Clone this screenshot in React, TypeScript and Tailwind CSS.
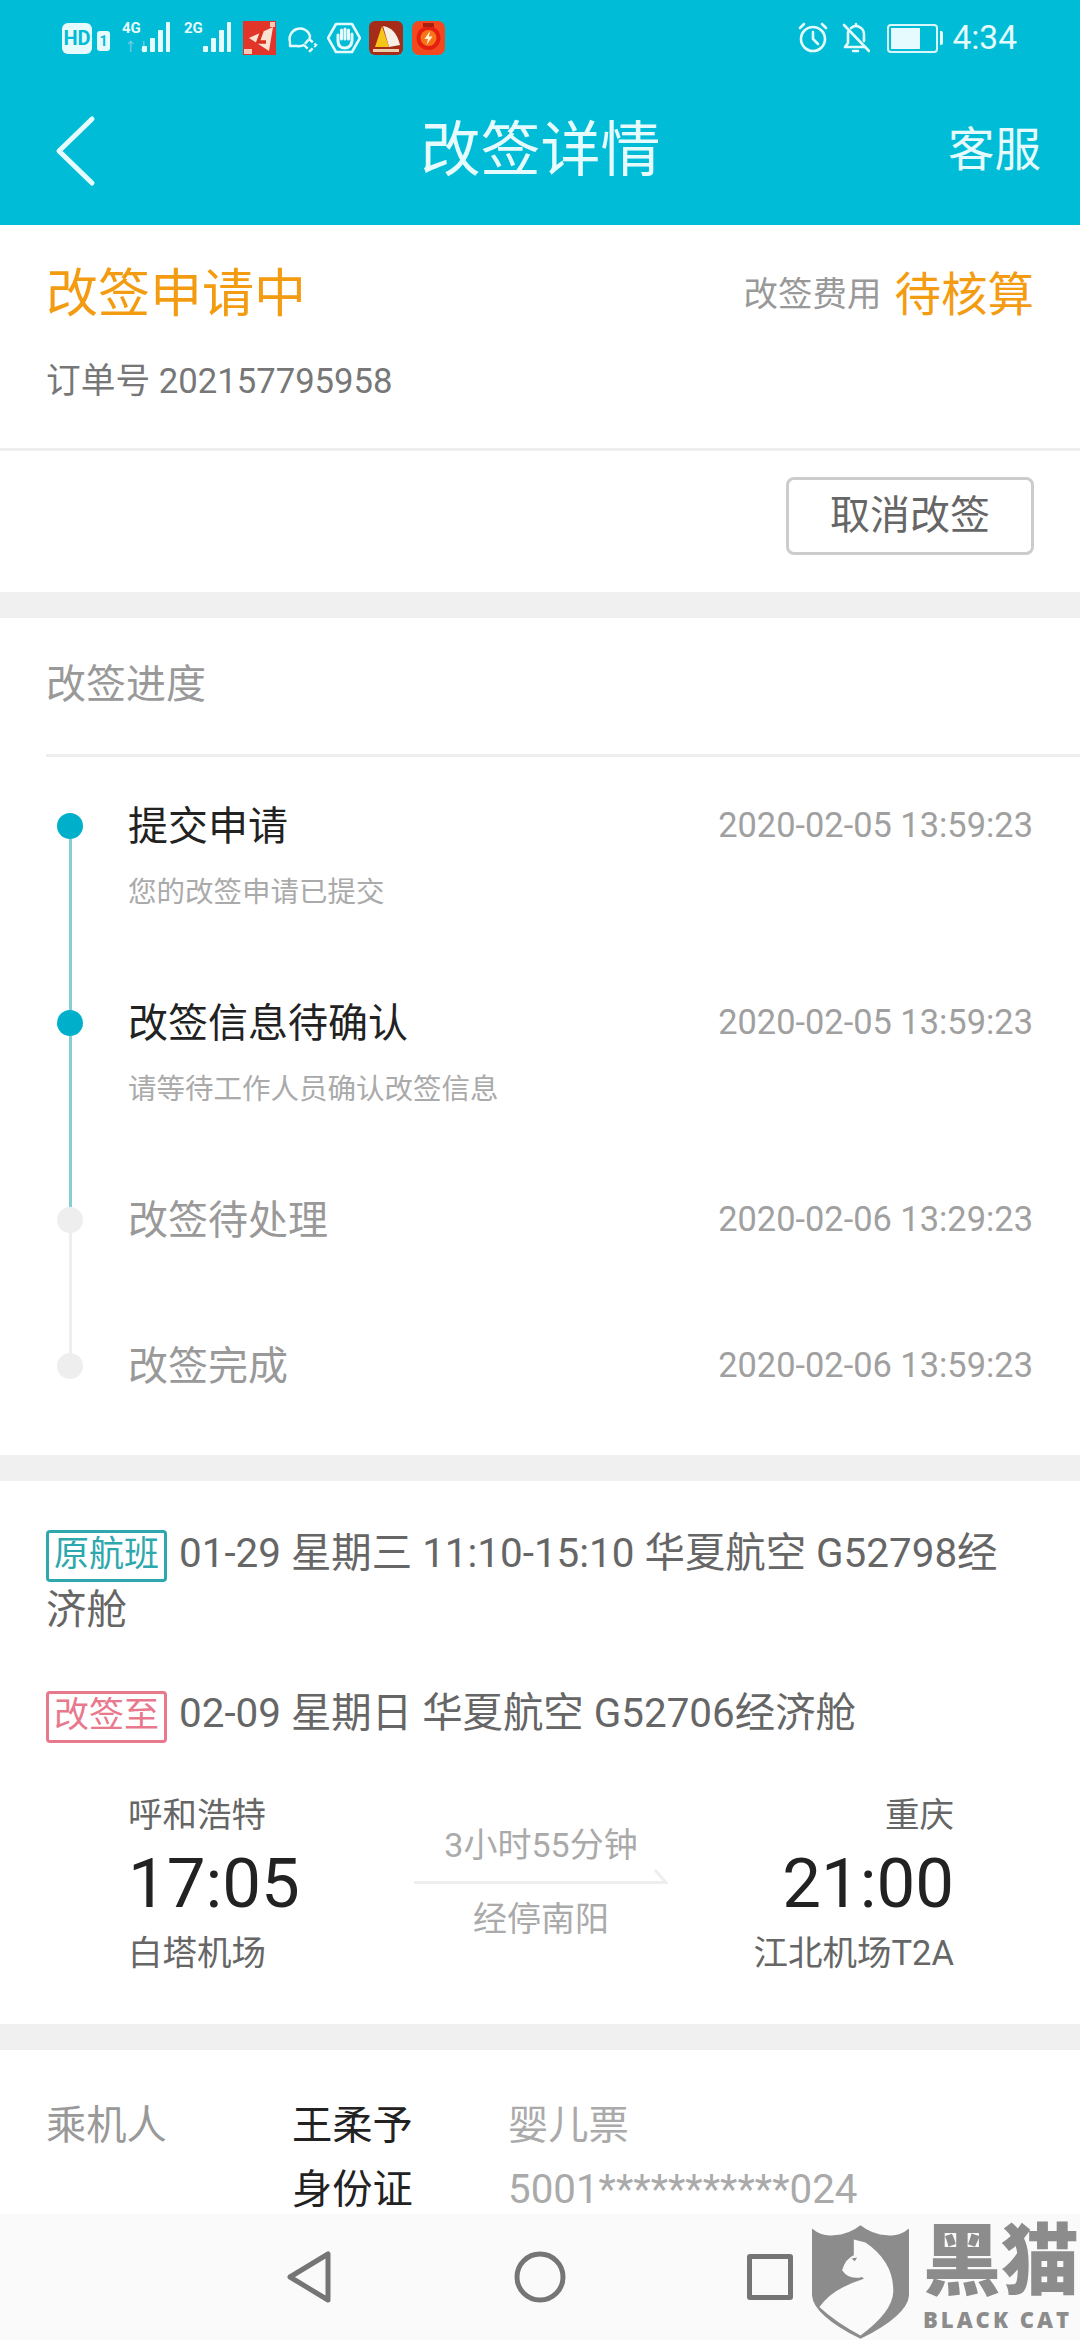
import React from "react";

const steps = [
  { title: "提交申请", sub: "您的改签申请已提交", time: "2020-02-05 13:59:23", done: true, lineDone: true, rowH: "h-[197px]" },
  { title: "改签信息待确认", sub: "请等待工作人员确认改签信息", time: "2020-02-05 13:59:23", done: true, lineDone: true, rowH: "h-[197px]" },
  { title: "改签待处理", sub: "", time: "2020-02-06 13:29:23", done: false, lineDone: false, rowH: "h-[146px]" },
  { title: "改签完成", sub: "", time: "2020-02-06 13:59:23", done: false, lineDone: false, rowH: "h-[26px]" },
];

const Bars = ({ className }: { className?: string }) => (
  <svg width="30" height="32" viewBox="0 0 30 32" className={className} fill="#e6fbfd">
    <rect x="0" y="25" width="5" height="6" rx="1" />
    <rect x="8" y="17" width="5" height="14" rx="1" />
    <rect x="16" y="9" width="5" height="22" rx="1" />
    <rect x="24" y="1" width="4" height="30" rx="1" />
  </svg>
);

const StatusBar = () => (
  <div className="h-[76px] flex items-center pl-[62px] pr-[63px] justify-between">
    <div className="flex items-center">
      <div className="w-[30px] h-[31px] rounded-[6px] bg-[#e6fbfd] text-[#00bcd6] text-[20px] leading-[31px] font-bold text-center">HD</div>
      <div className="ml-[5px] mt-[5px] w-[13px] h-[20px] rounded-[3px] bg-[#e6fbfd] text-[#00bcd6] text-[14px] leading-[20px] font-bold text-center">1</div>
      <div className="ml-[12px] relative w-[50px] h-[34px]">
        <span className="absolute left-0 -top-[2px] text-[15px] leading-[18px] font-bold text-[#e6fbfd]">4G</span>
        <span className="absolute left-[2px] top-[19px] text-[13px] leading-[14px] font-bold text-[#6cc9e8]">↑↓</span>
        <Bars className="absolute right-0 top-0" />
      </div>
      <div className="ml-[12px] relative w-[49px] h-[34px]">
        <span className="absolute left-0 -top-[2px] text-[15px] leading-[18px] font-bold text-[#e6fbfd]">2G</span>
        <Bars className="absolute right-0 top-0" />
      </div>
      <svg width="33" height="34" viewBox="0 0 33 34" className="ml-[10px]">
        <rect width="33" height="34" fill="#e2352a" />
        <path d="M30 6 L6 17 L26 30 Z" fill="#fbe3d4" />
        <path d="M19 10 L15 21 H23" fill="none" stroke="#d9301f" strokeWidth="3.5" />
        <rect x="27" y="1" width="5" height="5" fill="#f6c9b8" />
        <rect x="1" y="28" width="8" height="5" fill="#f6c9b8" />
      </svg>
      <svg width="33" height="30" viewBox="0 0 33 30" className="ml-[9px]" fill="none" stroke="#e6fbfd" strokeWidth="2.4">
        <path d="M5 23 L5 19 A10 10 0 1 1 25 13 A11 11 0 0 1 12 23 Z" strokeLinejoin="round" />
        <path d="M24 16 L31 22 L25 28 L19 22 Z" fill="#00bcd6" strokeDasharray="5 2" />
      </svg>
      <svg width="34" height="34" viewBox="0 0 34 34" className="ml-[9px]" fill="none">
        <path d="M9 3 H25 L33 17 L25 31 H9 L1 17 Z" stroke="#e6fbfd" strokeWidth="2.6" strokeLinejoin="round" />
        <path d="M11 14 V20 Q11 27 18 27 Q24 27 25 20 V13 M14.500 9 V18 M18 8 V18 M21.500 9 V18" stroke="#e6fbfd" strokeWidth="3" strokeLinecap="round" />
      </svg>
      <svg width="34" height="34" viewBox="0 0 34 34" className="ml-[8px]">
        <rect width="34" height="34" rx="6" fill="#a52c18" />
        <path d="M14 5 Q27 7 31 24 L20 26 Z" fill="#f7efe6" />
        <path d="M13 5 L6 26 H20 Z" fill="#f5c518" />
        <rect x="4" y="28" width="26" height="3" fill="#eccfa8" />
      </svg>
      <svg width="33" height="34" viewBox="0 0 33 34" className="ml-[9px]">
        <rect width="33" height="34" rx="7" fill="#f4491e" />
        <circle cx="16.500" cy="17" r="12" fill="#e41f12" />
        <circle cx="16.500" cy="17" r="8" fill="#f97316" />
        <rect x="11" y="2" width="11" height="4" fill="#a8200f" />
        <path d="M18 10 L12.500 18 H16 L14.500 24 L20.500 15.500 H17 Z" fill="#fff4d6" />
      </svg>
    </div>
    <div className="flex items-center">
      <svg width="30" height="32" viewBox="0 0 30 32" fill="none" stroke="#e6fbfd" strokeWidth="2.6" strokeLinecap="round">
        <circle cx="15" cy="17" r="12" />
        <path d="M15 10 V17 L20 22" />
        <path d="M2 6 L6 2 M28 6 L24 2" />
      </svg>
      <svg width="28" height="32" viewBox="0 0 28 32" className="ml-[14px]" fill="none" stroke="#e6fbfd" strokeWidth="2.6" strokeLinecap="round">
        <path d="M6 10 V21 L3 25 H23 M9 6 Q14 2 19 6 Q22 8 22 13 V19" strokeLinejoin="round" />
        <path d="M11 29 H16 M14 2 V4" />
        <path d="M2 3 L27 29" />
      </svg>
      <div className="ml-[17px] flex items-center">
        <div className="w-[51px] h-[29px] rounded-[4px] border-2 border-[#d8f7fa] p-[2px]">
          <div className="w-[29px] h-full bg-[#e6fbfd]" />
        </div>
        <div className="ml-[2px] w-[3px] h-[14px] bg-[#e6fbfd] rounded-r-[2px]" />
      </div>
      <span className="ml-[9px] text-[33.500px] leading-none text-[#e6fbfd]">4:34</span>
    </div>
  </div>
);

const ShieldLogo = () => (
  <svg width="97" height="114" viewBox="0 0 290 340">
    <path d="M0 10 Q30 35 65 30 Q110 28 145 0 Q180 28 225 30 Q260 35 290 10 L290 210 Q285 270 145 340 Q5 270 0 210 Z" fill="#8c8c8c" />
    <path d="M125 43 L160 52 Q245 110 243 200 Q240 260 145 330 Q70 290 22 245 Q60 190 155 160 L150 155 Q110 165 90 135 Q100 100 125 90 Z" fill="#fafafa" />
    <path d="M118 100 L135 97 L128 108 Z" fill="#8c8c8c" />
  </svg>
);

export default function App() {
  return (
    <div className="relative w-[1080px] h-[2340px] overflow-hidden flex flex-col bg-white [font-family:Roboto,'Noto_Sans_CJK_SC',sans-serif]">
      {/* header */}
      <div className="bg-[#00bcd6] shrink-0">
        <StatusBar />
        <div className="h-[149px] grid grid-cols-[1fr_auto_1fr] items-center pl-[46px] pr-[39px]">
          <svg width="46" height="72" viewBox="0 0 46 72" fill="none" stroke="#e6fbfd" strokeWidth="5" strokeLinecap="round" strokeLinejoin="round" className="ml-[6px]">
            <path d="M40 4 L7 36 L40 68" />
          </svg>
          <div className="text-[60px] leading-none text-[#e6fbfd] -translate-x-[3px]">改签详情</div>
          <div className="text-right text-[46.500px] leading-none text-[#e6fbfd]">客服</div>
        </div>
      </div>

      <div className="flex-1 min-h-0 overflow-hidden bg-[#f0f0f0]">
        {/* status */}
        <div className="bg-white">
          <div className="pl-[46px] pr-[46px] pt-[40px] pb-[47px] border-b-[3px] border-[#eeeeee]">
            <div className="flex items-center justify-between h-[60px]">
              <span className="text-[52px] leading-[60px] text-[#f39c12]">改签申请中</span>
              <div className="flex items-center">
                <span className="text-[34.500px] text-[#999999]">改签费用</span>
                <span className="ml-[13px] text-[46.500px] leading-[60px] text-[#f39c12]">待核算</span>
              </div>
            </div>
            <div className="mt-[36px] text-[34.700px] leading-[40px] text-[#777777]">订单号 202157795958</div>
          </div>
          <div className="pt-[26px] pb-[37px] pr-[46px] flex justify-end">
            <div className="w-[248px] h-[78px] rounded-[8px] border-[3px] border-[#cccccc] flex items-center justify-center text-[40px] text-[#666666]">取消改签</div>
          </div>
        </div>

        {/* progress */}
        <div className="mt-[26px] bg-white pb-[76px]">
          <div className="ml-[46px] pt-[47px] pb-[49px] border-b-[3px] border-[#eeeeee] text-[40px] leading-[40px] text-[#999999]">改签进度</div>
          <div className="pt-[56px] pl-[57px] pr-[47px]">
            {steps.map((s) => (
              <div key={s.title} className={`flex ${s.rowH}`}>
                <div className="w-[26px] flex flex-col items-center shrink-0">
                  <div className={`w-[26px] h-[26px] rounded-full shrink-0 ${s.done ? "bg-[#00afca]" : "bg-[#eeeeee]"}`} />
                  {s.title !== "改签完成" && <div className={`w-[3px] flex-1 ${s.lineDone ? "bg-[#86ced4]" : "bg-[#eeeeee]"}`} />}
                </div>
                <div className="ml-[45px] flex-1">
                  <div className="flex items-center justify-between h-[26px]">
                    <span className={`mt-[2px] text-[40px] ${s.done ? "text-[#222222]" : "text-[#999999]"}`}>{s.title}</span>
                    <span className="text-[34.400px] text-[#a0a0a0]">{s.time}</span>
                  </div>
                  {s.sub && <div className="mt-[39px] text-[28.500px] leading-[30px] text-[#aaaaaa]">{s.sub}</div>}
                </div>
              </div>
            ))}
          </div>
        </div>

        {/* flight */}
        <div className="mt-[26px] bg-white pt-[44px] pb-[50px]">
          <div className="pl-[46px] pr-[46px] text-[40.400px] leading-[57px] text-[#666666]">
            <span className="inline-block align-middle w-[121px] h-[52px] mr-[12px] rounded-[4px] border-[3px] border-[#2ea8ad] text-[#2ea8ad] text-[35px] leading-[44px] text-center">原航班</span>
            01-29 星期三 11:10-15:10 华夏航空 G52798经济舱
          </div>
          <div className="mt-[46px] px-[46px] text-[40.400px] leading-[57px] text-[#666666]">
            <span className="inline-block align-middle w-[121px] h-[52px] mr-[12px] rounded-[4px] border-[3px] border-[#e8788c] text-[#e8788c] text-[35px] leading-[44px] text-center">改签至</span>
            02-09 星期日 华夏航空 G52706经济舱
          </div>
          <div className="mt-[51px] pl-[128px] pr-[126px] flex justify-between">
            <div className="w-[260px]">
              <div className="text-[34.500px] leading-[42px] text-[#666666]">呼和浩特</div>
              <div className="mt-[13px] text-[69px] leading-[70px] text-[#222222]">17:05</div>
              <div className="mt-[13px] text-[34.500px] leading-[42px] text-[#666666]">白塔机场</div>
            </div>
            <div className="w-[254px] flex flex-col items-center">
              <div className="mt-[30px] text-[34px] leading-[42px] text-[#aaaaaa]">3小时55分钟</div>
              <svg width="254" height="16" viewBox="0 0 254 16" fill="none" stroke="#eeeeee" strokeWidth="3" className="mt-[2px]">
                <path d="M0 14.500 H252 L241 2" />
              </svg>
              <div className="mt-[14px] text-[34px] leading-[42px] text-[#aaaaaa]">经停南阳</div>
            </div>
            <div className="w-[260px] text-right">
              <div className="text-[34.500px] leading-[42px] text-[#666666]">重庆</div>
              <div className="mt-[13px] text-[69px] leading-[70px] text-[#222222]">21:00</div>
              <div className="mt-[13px] text-[34.500px] leading-[42px] text-[#666666]">江北机场T2A</div>
            </div>
          </div>
        </div>

        {/* passenger */}
        <div className="mt-[26px] bg-white pt-[44px] pl-[46px] text-[40.300px] leading-[64px]">
          <div className="flex">
            <div className="w-[246px] text-[#999999]">乘机人</div>
            <div className="w-[216px] text-[#222222]">王柔予</div>
            <div className="text-[#aaaaaa]">婴儿票</div>
          </div>
          <div className="flex">
            <div className="w-[246px]" />
            <div className="w-[216px] text-[#222222]">身份证</div>
            <div className="text-[#aaaaaa]">5001***********024</div>
          </div>
        </div>
      </div>

      {/* nav bar */}
      <div className="h-[126px] shrink-0 bg-[#fafafa] flex items-center pl-[286px] pt-[24px] pb-[24px]">
        <svg width="46" height="52" viewBox="0 0 46 52" fill="none" stroke="#757575" strokeWidth="5" strokeLinejoin="round">
          <path d="M42 3 V49 L4 26 Z" />
        </svg>
        <svg width="52" height="52" viewBox="0 0 52 52" fill="none" stroke="#757575" strokeWidth="5" className="ml-[182px]">
          <circle cx="26" cy="26" r="23" />
        </svg>
        <div className="ml-[181px] w-[46px] h-[46px] rounded-[3px] border-[5px] border-[#757575]" />
      </div>

      {/* watermark */}
      <div className="absolute left-[812px] top-[2225px] flex">
        <ShieldLogo />
        <div className="ml-[14px]">
          <div className="text-[78px] leading-[76px] font-black text-[#8c8c8c] whitespace-nowrap">黑猫</div>
          <div className="mt-[6px] text-[22px] leading-[24px] font-extrabold tracking-[3px] text-[#8c8c8c] whitespace-nowrap [font-family:'Open_Sans',sans-serif]">BLACK CAT</div>
        </div>
      </div>
    </div>
  );
}
